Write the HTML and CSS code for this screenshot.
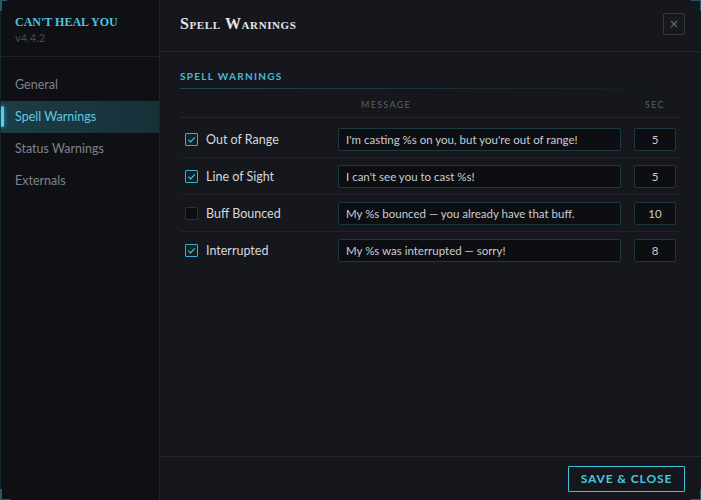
FILE: index.html
```html
<!DOCTYPE html>
<html>
<head>
<meta charset="utf-8">
<link rel="stylesheet" href="styles.css">
</head>
<body>
<div class="app">
  <aside class="sidebar">
    <div class="brand">
      <div class="brand-title">Can't Heal You</div>
      <div class="brand-version">v4.4.2</div>
    </div>
    <nav class="nav">
      <div class="nav-item">General</div>
      <div class="nav-item active">Spell Warnings</div>
      <div class="nav-item">Status Warnings</div>
      <div class="nav-item">Externals</div>
    </nav>
  </aside>
  <main class="main">
    <header class="header">
      <h1 class="title">Spell Warnings</h1>
      <button class="close">×</button>
    </header>
    <section class="content">
      <div class="section-title">Spell Warnings</div>
      <div class="table">
        <div class="thead">
          <div class="col-name"></div>
          <div class="col-msg th msg-th">Message</div>
          <div class="col-sec th">Sec</div>
        </div>
        <div class="tbody">
          <div class="row">
            <div class="col-name"><span class="cb checked"><svg viewBox="0 0 12 12"><path d="M2.5 6.2 L5 8.6 L9.6 3.6"/></svg></span>Out of Range</div>
            <div class="col-msg"><div class="input">I'm casting %s on you, but you're out of range!</div></div>
            <div class="col-sec"><div class="input num">5</div></div>
          </div>
          <div class="row">
            <div class="col-name"><span class="cb checked"><svg viewBox="0 0 12 12"><path d="M2.5 6.2 L5 8.6 L9.6 3.6"/></svg></span>Line of Sight</div>
            <div class="col-msg"><div class="input">I can't see you to cast %s!</div></div>
            <div class="col-sec"><div class="input num">5</div></div>
          </div>
          <div class="row">
            <div class="col-name"><span class="cb"></span>Buff Bounced</div>
            <div class="col-msg"><div class="input">My %s bounced — you already have that buff.</div></div>
            <div class="col-sec"><div class="input num">10</div></div>
          </div>
          <div class="row last">
            <div class="col-name"><span class="cb checked"><svg viewBox="0 0 12 12"><path d="M2.5 6.2 L5 8.6 L9.6 3.6"/></svg></span>Interrupted</div>
            <div class="col-msg"><div class="input">My %s was interrupted — sorry!</div></div>
            <div class="col-sec"><div class="input num">8</div></div>
          </div>
        </div>
      </div>
    </section>
    <footer class="footer">
      <button class="save">Save &amp; Close</button>
    </footer>
  </main>
  <span class="corner tl"></span>
  <span class="corner tr"></span>
  <span class="corner bl"></span>
  <span class="corner br"></span>
</div>
</body>
</html>
```
FILE: styles.css
```css
* { box-sizing: border-box; }
html, body { margin: 0; padding: 0; background: #15171c; }
body { font-family: Lato, "Noto Sans", sans-serif; color: #d4d8de; }

.app {
  position: relative;
  width: 701px;
  height: 500px;
  display: flex;
  background: #15171c;
  border-left: 1px solid #12282e;
}

.sidebar {
  width: 159px;
  flex: none;
  background: #0e1014;
  border-right: 1px solid #1f2228;
  display: flex;
  flex-direction: column;
}
.brand {
  height: 57px;
  padding: 14px 0 0 14px;
  border-bottom: 1px solid #1f2228;
}
.brand-title {
  font-family: "Liberation Serif", "DejaVu Serif", serif;
  font-weight: bold;
  text-transform: uppercase;
  font-size: 12px;
  letter-spacing: 0;
  color: #4cc4df;
  line-height: 16px;
}
.brand-version {
  font-size: 11px;
  color: #464b53;
  margin-top: 1px;
  line-height: 14px;
}
.nav { padding-top: 12px; display: flex; flex-direction: column; }
.nav-item {
  position: relative;
  height: 32px;
  line-height: 32px;
  padding-left: 14px;
  font-size: 12.5px;
  color: #7e848c;
}
.nav-item.active {
  background: linear-gradient(90deg, #1c3c46, #173038);
  color: #5ccbe4;
}
.nav-item.active::before {
  content: "";
  position: absolute;
  left: 0;
  top: 5px;
  bottom: 6px;
  width: 3px;
  border-radius: 2px;
  background: #4fd0ec;
  box-shadow: 0 0 5px #2aa8c8;
}

.main { flex: 1; display: flex; flex-direction: column; }
.header {
  height: 52px;
  flex: none;
  border-bottom: 1px solid #24272d;
  display: flex;
  align-items: center;
  justify-content: space-between;
  padding: 0 16px 0 20px;
}
.title {
  margin: 0;
  font-family: "Liberation Serif", "DejaVu Serif", serif;
  font-variant: small-caps;
  font-weight: bold;
  font-size: 16px;
  letter-spacing: 0.6px;
  color: #e4e6ea;
  padding-bottom: 3px;
}
.close {
  width: 22px;
  height: 22px;
  padding: 0;
  margin-bottom: 3px;
  background: #17191e;
  border: 1px solid #34373e;
  border-radius: 2px;
  color: #6c7078;
  font-size: 12px;
  line-height: 18px;
  font-family: "DejaVu Sans", sans-serif;
}

.content { flex: 1; padding: 17px 20px 0 20px; }
.section-title {
  font-size: 10px;
  font-weight: bold;
  letter-spacing: 1.3px;
  text-transform: uppercase;
  color: #47b9d8;
  line-height: 14px;
  padding-bottom: 5px;
  border-bottom: 1px solid;
  border-image: linear-gradient(90deg, #1d4a55, #1a2c33 60%, rgba(21,23,28,0)) 1;
}
.table { padding: 0 1px; }
.thead {
  display: flex;
  height: 29px;
  align-items: center;
  border-bottom: 1px solid #25282e;
  padding-top: 2px;
}
.th {
  font-size: 9px;
  letter-spacing: 1.3px;
  text-transform: uppercase;
  color: #59606a;
  text-align: center;
}
.th.msg-th { text-align: left; padding-left: 23px; }
.tbody { padding-top: 3px; }
.row {
  display: flex;
  align-items: center;
  height: 37px;
  border-bottom: 1px solid #21252b;
}
.row.last { border-bottom: none; }
.col-name {
  width: 157px;
  flex: none;
  display: flex;
  align-items: center;
  font-size: 12.5px;
  color: #d6d9de;
  padding-left: 4px;
}
.col-msg { width: 283px; flex: none; }
.col-sec { flex: none; margin-left: 13px; width: 42px; }
.cb {
  width: 13px;
  height: 13px;
  border: 1px solid #2b2f36;
  background: #0b0d10;
  border-radius: 1px;
  margin-right: 8px;
  display: inline-flex;
  align-items: center;
  justify-content: center;
}
.cb.checked { border-color: #3aaecb; background: #0f2228; }
.cb svg { width: 11px; height: 11px; fill: none; stroke: #4cc4df; stroke-width: 1.3; }
.input {
  height: 23px;
  line-height: 21px;
  background: #0c0e12;
  border: 1px solid #1b3940;
  border-radius: 2px;
  font-size: 11.5px;
  color: #c9cdd3;
  padding: 0 7px;
  white-space: nowrap;
  overflow: hidden;
}
.input.num { text-align: center; padding: 0; }

.footer {
  height: 44px;
  flex: none;
  border-top: 1px solid #24272d;
  display: flex;
  justify-content: flex-end;
  align-items: flex-start;
  padding: 9px 16px 0 0;
}
.save {
  width: 117px;
  height: 26px;
  background: transparent;
  border: 1.5px solid #3fc0dd;
  border-radius: 1px;
  color: #4cc6e0;
  font-family: Lato, "Noto Sans", sans-serif;
  font-size: 12px;
  font-weight: bold;
  letter-spacing: 0.9px;
  text-transform: uppercase;
  padding: 0 0 1px 0;
}

.corner { position: absolute; width: 10px; height: 11px; border-color: #1f5a66; border-style: solid; border-width: 0; }
.corner.tl { left: -1px; top: 0; border-top-width: 1px; border-left-width: 2px; width: 7px; }
.corner.tr { right: 0; top: 0; border-top-width: 1px; border-right-width: 1px; }
.corner.bl { left: -1px; bottom: 0; border-bottom-width: 1px; border-left-width: 2px; }
.corner.br { right: 0; bottom: 0; border-bottom-width: 1px; border-right-width: 1px; }
```
